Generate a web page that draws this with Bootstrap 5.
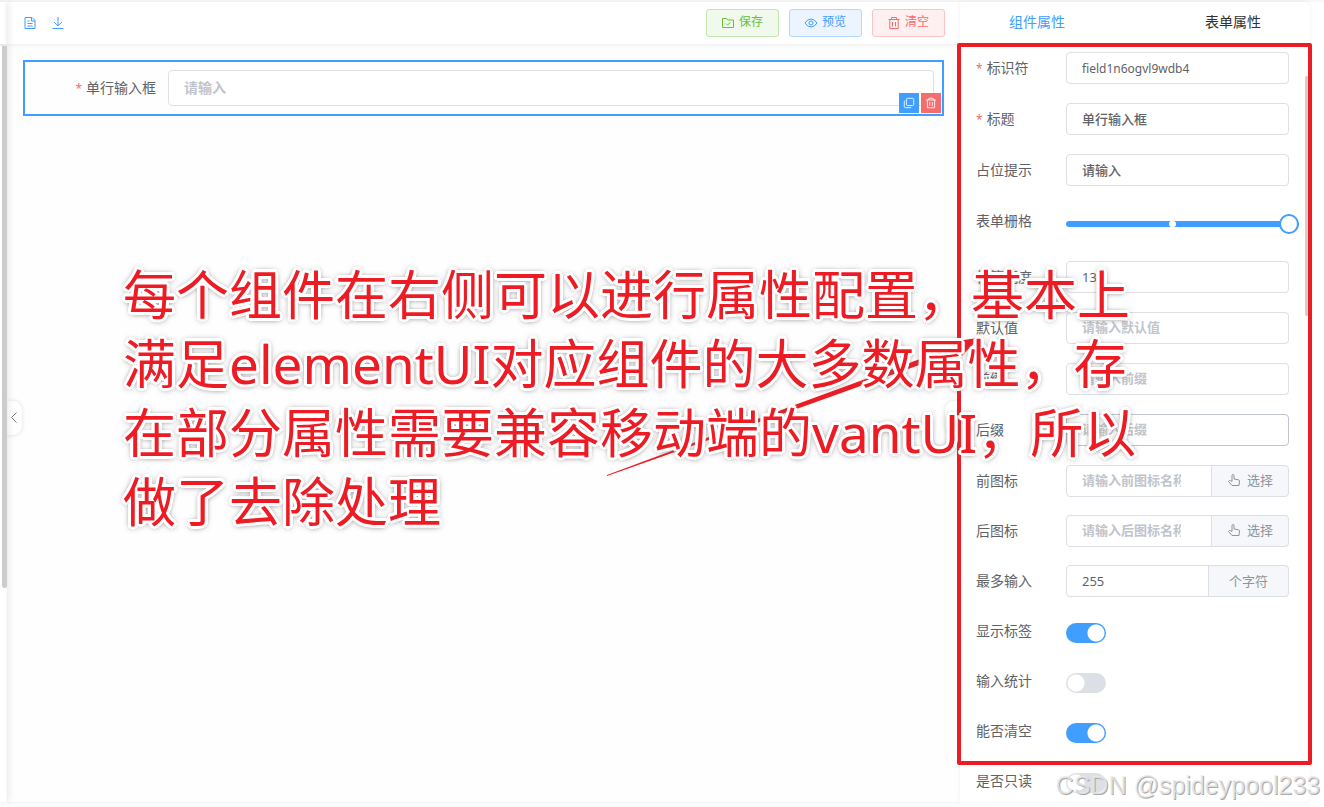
<!DOCTYPE html>
<html lang="zh-CN">
<head>
<meta charset="utf-8">
<meta name="viewport" content="width=device-width, initial-scale=1">
<title>表单设计器</title>
<link href="https://cdn.jsdelivr.net/npm/bootstrap@5.3.0/dist/css/bootstrap.min.css" rel="stylesheet">
<style>
:root { --blue: #409eff; --green: #67c23a; --danger: #f56c6c; --line: #dcdfe6; --ink: #606266; --ring: #ed1c24; }
body { font-family: "Noto Sans", "Noto Sans CJK SC", sans-serif; font-size: 14px; color: var(--ink); background: #fff; }
.app { height: 100vh; padding: 2px 14px 5px 0; box-shadow: inset 0 2px #f7f7f7; overflow: hidden; }
.rail { width: 7px; flex: none; z-index: 1; box-shadow: 0 0 8px #0002; padding-left: 2px; }
.rail-head { height: 44px; margin-left: -2px; border-bottom: 2px solid #e8eaee; }
.rail-thumb { height: 542px; background: #ccc; border-radius: 0 0 3px 3px; }
.stage { background: #fefefe; min-width: 0; box-shadow: 0 1px 2px #0001; }
.topbar { height: 42px; background: #fff; box-shadow: 0 1px 5px #00000014; padding: 0 15px 0 16px; }
svg.ic { width: 14px; height: 14px; fill: none; stroke: currentColor; stroke-linejoin: round; display: block; }
.tools { gap: 14px; }
.tool { color: var(--blue); padding: 0; border: 0; background: none; }
.acts { gap: 10px; }
.act { height: 28px; font-size: 12px; line-height: 12px; padding: 0 15px 2px 14px; border-radius: 3px; border: 1px solid; gap: 4px; }
.act-save { color: var(--green); background: #f0f9eb; border-color: #c2e7b0; }
.act-view { color: var(--blue); background: #ecf5ff; border-color: #b3d8ff; }
.act-clear { color: var(--danger); background: #fef0f0; border-color: #fbc4c4; }
.act svg.ic { position: relative; top: 1px; }
.canvas-area { padding: 16px; }
.picked { border: 2px solid var(--blue); padding: 8px; height: 56px; }
.picked label { width: 135px; padding: 0 12px 2px 0; text-align: right; }
.req::before { content: "*"; color: var(--danger); font-size: 12px; margin-right: 4px; }
.form-control { border-color: var(--line); color: var(--ink); border-radius: 4px; background: #fff; min-width: 0; }
.form-control::placeholder { color: #c0c4cc; font-weight: 700; opacity: 1; }
.picked .form-control { height: 36px; font-size: 14px; padding: 0 15px 2px; }
.mini { width: 20px; height: 20px; border: 0; padding: 4px; color: #fff; }
.mini-copy { background: var(--blue); }
.mini-del { background: var(--danger); }
.mini svg.ic { width: 12px; height: 12px; }
.corner { right: 1px; bottom: 1px; gap: 2px; }
.knob { width: 15px; height: 34px; top: 399px; border: 0; padding: 0; color: #777; background: #fff; box-shadow: 0 0 4px #0002; }
.knob-l { left: 0; border-radius: 0 9px 9px 0; }
.knob-r { right: 0; border-radius: 9px 0 0 9px; }
.props { width: 350px; flex: none; background: #fff; border-radius: 0 6px 6px 0; box-shadow: 0 0 5px #0001; }
.tabs { height: 42px; padding: 0 49px 4px; }
.tabs a { color: #303133; text-decoration: none; }
.tabs a.on { color: var(--blue); }
.fields { padding: 8px 21px 0 16px; overflow: hidden; min-height: 0; }
.item { height: 32px; margin-bottom: 18px; }
.item-t { height: 33px; }
.item-s { height: 38px; }
.item > label { width: 90px; flex: none; line-height: 32px; }
.item .form-control { height: 32px; font-size: 13px; padding: 0 30px 2px 15px; font-weight: 500; }
.item .latin { font-weight: 400; padding-bottom: 0; }
.item .ident { font-size: 12px; }
.item .hover-edge { border-color: #c0c4cc; }
.item .input-group { flex-wrap: nowrap; flex: 1; height: 32px; }
.tail { background: #f5f7fa; border: 1px solid var(--line); color: #909399; font-size: 13px; padding: 0 15px 2px; gap: 6px; border-radius: 4px; line-height: 13px; }
.tail-t { padding: 0 20px; }
.item .form-check-input { width: 40px; height: 20px; margin: 8px 0 0; border: 0; border-radius: 10px; background-color: var(--line);
  background-image: radial-gradient(circle at 10px 10px, #fff 8px, #fff0 9px) !important; background-size: 100% 100%; background-position: 0 0 !important; }
.item .form-check-input:checked { background-color: var(--blue); background-image: radial-gradient(circle at 30px 10px, #fff 8px, #fff0 9px) !important; }
.grid-range { flex: 1; height: 20px; margin: 9px -10px 0 0; appearance: none; background: none; min-width: 0; }
.grid-range::-webkit-slider-runnable-track { height: 6px; border-radius: 3px;
  background: radial-gradient(circle at calc(50% - 10px) 50%, #fff 3px, #fff0 4px), linear-gradient(var(--blue), var(--blue)); }
.grid-range::-webkit-slider-thumb { appearance: none; width: 20px; height: 20px; margin-top: -7px; border: 2px solid var(--blue); border-radius: 50%; background: #fff; }
.thumb { right: 1px; top: 74px; width: 4px; height: 240px; background: #cfcfd2; border-radius: 2px; }
/* review annotations floating above the interface */
.frame { top: 41px; left: -3px; right: -2px; height: 722px; border: 4px solid var(--ring); border-radius: 2px; pointer-events: none; }
.arrow { left: 600px; top: 330px; width: 390px; height: 150px; pointer-events: none; }
.remark { left: 123px; top: 260px; margin: 0; font-size: 53px; line-height: 69px; color: var(--ring); white-space: nowrap; pointer-events: none;
  text-shadow: 3px 0 #fff, -3px 0 #fff, 0 3px #fff, 0 -3px #fff, 2px 2px #fff, -2px 2px #fff, 2px -2px #fff, -2px -2px #fff, 3px 1px #fff, -3px 1px #fff, 1px -3px #fff, -1px -3px #fff, 0 0 6px #777, 0 1px 6px #777; }
.credit { right: 4px; bottom: 3px; font: 25px/38px "Liberation Sans", sans-serif; color: #e9e9e9d0; text-shadow: 1px 1px #aaa; pointer-events: none; }
</style>
</head>
<body>
<div class="app d-flex position-relative">
  <div class="rail"><div class="rail-head"></div><div class="rail-thumb"></div></div>

  <main class="stage flex-fill position-relative">
    <header class="topbar d-flex align-items-center">
      <div class="tools d-flex me-auto">
        <button class="tool" aria-label="查看数据"><svg class="ic" viewBox="0 0 14 14"><path d="M2 1.500h7L12 4.500v8H2zM8.500 1.500v3.500H12M4.500 5h2M4.500 7.500h5M4.500 10h5"/></svg></button>
        <button class="tool" aria-label="导入"><svg class="ic" viewBox="0 0 14 14"><path d="M7 1v8.500M3 6l4 3.800L11 6M1.500 12.500h11"/></svg></button>
      </div>
      <div class="acts d-flex">
        <button class="act act-save d-flex align-items-center"><svg class="ic" viewBox="0 0 14 14"><path d="M1.500 2.500h4l1.300 1.500h5.700v7.500h-11zM5 7.500l1.500 1.500 3-2.500"/></svg>保存</button>
        <button class="act act-view d-flex align-items-center"><svg class="ic" viewBox="0 0 14 14"><path d="M1 7q2.500-4 6-4t6 4q-2.500 4-6 4T1 7z"/><circle cx="7" cy="7" r="2"/></svg>预览</button>
        <button class="act act-clear d-flex align-items-center"><svg class="ic" viewBox="0 0 14 14"><path d="M1.500 3.500h11M4.500 3.500v-2h5v2M2.800 3.500v9h8.400v-9M5.500 6v4.500M8.500 6v4.500"/></svg>清空</button>
      </div>
    </header>
    <section class="canvas-area">
      <div class="picked d-flex align-items-center position-relative">
        <label class="req" for="demo">单行输入框</label>
        <input id="demo" class="form-control flex-fill w-auto" placeholder="请输入">
        <div class="corner position-absolute d-flex">
          <button class="mini mini-copy" aria-label="复制"><svg class="ic" viewBox="0 0 14 14"><rect x="4" y="1.500" width="8.500" height="8.500" rx="1.500"/><path d="M2.500 4Q1.500 4.500 1.500 6v5q0 1.500 1.500 1.500h5q1.500 0 2-1"/></svg></button>
          <button class="mini mini-del" aria-label="删除"><svg class="ic" viewBox="0 0 14 14"><path d="M1 3.500h12M4.500 3.500v-2h5v2M2.800 3.500v9h8.400v-9M5.500 6v4.500M8.500 6v4.500"/></svg></button>
        </div>
      </div>
    </section>
    <button class="knob knob-l position-absolute" aria-label="收起左栏"><svg class="ic" viewBox="0 0 14 14"><path d="M9.500 1.500 4.500 6.500l5 5"/></svg></button>
    <button class="knob knob-r position-absolute" aria-label="收起右栏"><svg class="ic" viewBox="0 0 14 14"><path d="m4.500 1.500 5 5-5 5"/></svg></button>
  </main>

  <aside class="props d-flex flex-column position-relative">
    <nav class="tabs d-flex align-items-center justify-content-between flex-shrink-0"><a class="on" href="#">组件属性</a><a href="#">表单属性</a></nav>
    <form class="fields flex-fill">
      <div class="item item-t d-flex"><label class="req" for="f1">标识符</label><input id="f1" class="form-control latin ident" value="field1n6ogvl9wdb4"></div>
      <div class="item item-t d-flex"><label class="req" for="f2">标题</label><input id="f2" class="form-control" value="单行输入框"></div>
      <div class="item item-t d-flex"><label for="f3">占位提示</label><input id="f3" class="form-control" value="请输入"></div>
      <div class="item item-s d-flex align-items-start"><label for="f4">表单栅格</label><input id="f4" class="grid-range" type="range" min="0" max="24" value="24"></div>
      <div class="item item-t d-flex"><label for="f5">标签宽度</label><input id="f5" class="form-control latin" value="135"></div>
      <div class="item item-t d-flex"><label for="f6">默认值</label><input id="f6" class="form-control" placeholder="请输入默认值"></div>
      <div class="item item-t d-flex"><label for="f7">前缀</label><input id="f7" class="form-control" placeholder="请输入前缀"></div>
      <div class="item item-t d-flex"><label for="f8">后缀</label><input id="f8" class="form-control hover-edge" placeholder="请输入后缀"></div>
      <div class="item d-flex"><label for="f9">前图标</label><div class="input-group"><input id="f9" class="form-control" placeholder="请输入前图标名称"><button type="button" class="tail d-flex align-items-center flex-shrink-0"><svg class="ic" viewBox="0 0 14 14"><path d="M5 8.500V2.500q0-1 1-1t1 1V6l4.500.8q1 .3 1 1.200L12 12.500H5L1.500 8.500q.5-1.500 2-.8L5 8.500"/></svg>选择</button></div></div>
      <div class="item d-flex"><label for="f10">后图标</label><div class="input-group"><input id="f10" class="form-control" placeholder="请输入后图标名称"><button type="button" class="tail d-flex align-items-center flex-shrink-0"><svg class="ic" viewBox="0 0 14 14"><path d="M5 8.500V2.500q0-1 1-1t1 1V6l4.500.8q1 .3 1 1.200L12 12.500H5L1.500 8.500q.5-1.500 2-.8L5 8.500"/></svg>选择</button></div></div>
      <div class="item d-flex"><label for="f11">最多输入</label><div class="input-group"><input id="f11" class="form-control latin" value="255"><span class="tail tail-t d-flex align-items-center flex-shrink-0">个字符</span></div></div>
      <div class="item d-flex"><label for="f12">显示标签</label><input id="f12" class="form-check-input" type="checkbox" role="switch" checked></div>
      <div class="item d-flex"><label for="f13">输入统计</label><input id="f13" class="form-check-input" type="checkbox" role="switch"></div>
      <div class="item d-flex"><label for="f14">能否清空</label><input id="f14" class="form-check-input" type="checkbox" role="switch" checked></div>
      <div class="item d-flex mb-0"><label for="f15">是否只读</label><input id="f15" class="form-check-input" type="checkbox" role="switch"></div>
    </form>
    <div class="thumb position-absolute"></div>
    <div class="frame position-absolute"></div>
  </aside>

  <svg class="arrow position-absolute" viewBox="0 0 390 150" fill="#ed1c24" aria-hidden="true"><path d="M7 145 200 73 320 29 352 18 350 12 378 8 377 10 360 28 354 23 322 34 202 77 7 146z"/></svg>
  <p class="remark position-absolute">每个组件在右侧可以进行属性配置，基本上<br>满足elementUI对应组件的大多数属性，存<br>在部分属性需要兼容移动端的vantUI，所以<br>做了去除处理</p>
  <div class="credit position-absolute">CSDN @spideypool233</div>
</div>
<script src="https://cdn.jsdelivr.net/npm/bootstrap@5.3.0/dist/js/bootstrap.bundle.min.js"></script>
</body>
</html>
